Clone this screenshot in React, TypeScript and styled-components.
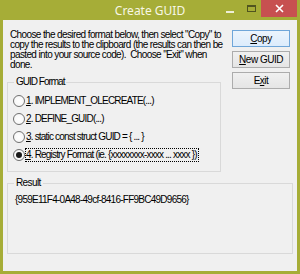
import React from 'react';
import styled, { createGlobalStyle } from 'styled-components';

const FONT = `"Liberation Sans", Arial, sans-serif`;

const Global = createGlobalStyle`
  html, body { margin: 0; padding: 0; background: #a6ad37; }
  body { width: 300px; height: 274px; overflow: hidden; }
  * { box-sizing: border-box; }
`;

const Window = styled.div`
  width: 300px;
  height: 274px;
  background: #a6ad37;
  padding: 0 3px 3px;
  display: flex;
  flex-direction: column;
`;

const TitleBar = styled.div`
  height: 20px;
  flex: none;
  display: grid;
  grid-template-columns: 1fr auto 1fr;
`;

const Title = styled.div`
  grid-column: 2;
  font-family: "Noto Sans", "Open Sans", sans-serif;
  font-size: 12px;
  line-height: 20px;
  padding-top: 1px;
  color: #f7f7e6;
  white-space: nowrap;
`;

const Controls = styled.div`
  grid-column: 3;
  display: flex;
  justify-content: flex-end;
  align-items: flex-start;
`;

const CapButton = styled.div<{ $w: number; $close?: boolean }>`
  width: ${(p) => p.$w}px;
  height: 17px;
  display: flex;
  align-items: center;
  justify-content: center;
  background: ${(p) => (p.$close ? '#c75050' : 'transparent')};
`;

const MinGlyph = styled.div`
  width: 8px;
  height: 2px;
  margin-top: 6px;
  background: #eeeed8;
`;

const MaxGlyph = styled.div`
  width: 9px;
  height: 7px;
  margin-top: -1px;
  border: 1px solid #50541f;
  border-top-width: 2px;
`;

const Client = styled.div`
  flex: 1;
  background: #f0f0f0;
  display: flex;
  flex-direction: column;
  padding: 10px 4px 0 4px;
  font-family: ${FONT};
  font-size: 10px;
  letter-spacing: -0.62px;
  line-height: 10px;
  color: #000;
`;

const TopArea = styled.div`
  display: flex;
  align-items: flex-start;
`;

const LeftCol = styled.div`
  width: 214px;
  display: flex;
  flex-direction: column;
`;

const Intro = styled.p`
  margin: 0 0 7px 3px;
  white-space: nowrap;
`;

const ButtonCol = styled.div`
  margin-left: 11px;
  display: flex;
  flex-direction: column;
  gap: 4px;
`;

const Button = styled.button<{ $default?: boolean }>`
  width: 58px;
  height: 17px;
  padding: 0;
  font-family: ${FONT};
  font-size: 10px;
  letter-spacing: -0.5px;
  line-height: 10px;
  color: #000;
  border: 1px solid ${(p) => (p.$default ? '#6fa6d9' : '#acacac')};
  background: ${(p) =>
    p.$default
      ? 'linear-gradient(#ecf4fc, #dcecfc)'
      : 'linear-gradient(#f0f0f0, #e5e5e5)'};
`;

const Group = styled.fieldset<{ $h?: number }>`
  margin: 0;
  border: 1px solid #d9d9d9;
  min-width: 0;
  ${(p) => (p.$h ? `height: ${p.$h}px;` : '')}
`;

const FormatGroup = styled(Group)`
  padding: 5px 0 7px 5px;
`;

const ResultGroup = styled(Group)`
  margin-top: 6px;
  padding: 7px 0 0 7px;
`;

const Legend = styled.legend`
  padding: 0 2px;
  margin-left: 1px;
  line-height: 10px;
  letter-spacing: -1px;
`;

const ResultLegend = styled(Legend)`
  margin-left: -1px;
  letter-spacing: -0.6px;
`;

const RadioRow = styled.label`
  display: flex;
  align-items: center;
  height: 18px;
`;

const RadioDot = styled.span<{ $checked?: boolean }>`
  width: 12px;
  height: 12px;
  flex: none;
  border-radius: 50%;
  border: 1px solid #707070;
  background: radial-gradient(circle, #ffffff 0%, #f4f4f4 100%);
  display: flex;
  align-items: center;
  justify-content: center;
  &::after {
    content: '';
    display: ${(p) => (p.$checked ? 'block' : 'none')};
    width: 6px;
    height: 6px;
    border-radius: 50%;
    background: #1a1a1a;
  }
`;

const RadioText = styled.span<{ $focus?: boolean }>`
  border: 1px dotted ${(p) => (p.$focus ? '#000' : 'transparent')};
  line-height: 12px;
  letter-spacing: -0.82px;
  padding-right: ${(p) => (p.$focus ? 1 : 0)}px;
  white-space: nowrap;
`;

const ResultText = styled.div`
  white-space: nowrap;
  letter-spacing: -0.75px;
`;

const options = [
  { n: '1', text: '. IMPLEMENT_OLECREATE(...)' },
  { n: '2', text: '. DEFINE_GUID(...)' },
  { n: '3', text: '. static const struct GUID = { ... }' },
  { n: '4', text: '. Registry Format (ie. {xxxxxxxx-xxxx ... xxxx })' },
];

export default function App() {
  const selected = '4';
  return (
    <>
      <Global />
      <Window>
        <TitleBar>
          <Title>Create GUID</Title>
          <Controls>
            <CapButton $w={23}>
              <MinGlyph />
            </CapButton>
            <CapButton $w={20}>
              <MaxGlyph />
            </CapButton>
            <CapButton $w={36} $close>
              <svg width="9" height="9" viewBox="0 0 9 9">
                <path d="M1 1 L8 8 M8 1 L1 8" stroke="#fff" strokeWidth="1.6" />
              </svg>
            </CapButton>
          </Controls>
        </TitleBar>
        <Client>
          <TopArea>
            <LeftCol>
              <Intro>
                Choose the desired format below, then select "Copy" to
                <br />
                copy the results to the clipboard (the results can then be
                <br />
                pasted into your source code).&nbsp; Choose "Exit" when
                <br />
                done.
              </Intro>
              <FormatGroup>
                <Legend>GUID Format</Legend>
                {options.map((o) => (
                  <RadioRow key={o.n}>
                    <RadioDot $checked={o.n === selected} />
                    <RadioText $focus={o.n === selected}>
                      <u>{o.n}</u>
                      {o.text}
                    </RadioText>
                  </RadioRow>
                ))}
              </FormatGroup>
            </LeftCol>
            <ButtonCol>
              <Button $default>
                <u>C</u>opy
              </Button>
              <Button>
                <u>N</u>ew GUID
              </Button>
              <Button>
                E<u>x</u>it
              </Button>
            </ButtonCol>
          </TopArea>
          <ResultGroup $h={76}>
            <ResultLegend>Result</ResultLegend>
            <ResultText>{'{959E11F4-0A48-49cf-8416-FF9BC49D9656}'}</ResultText>
          </ResultGroup>
        </Client>
      </Window>
    </>
  );
}
